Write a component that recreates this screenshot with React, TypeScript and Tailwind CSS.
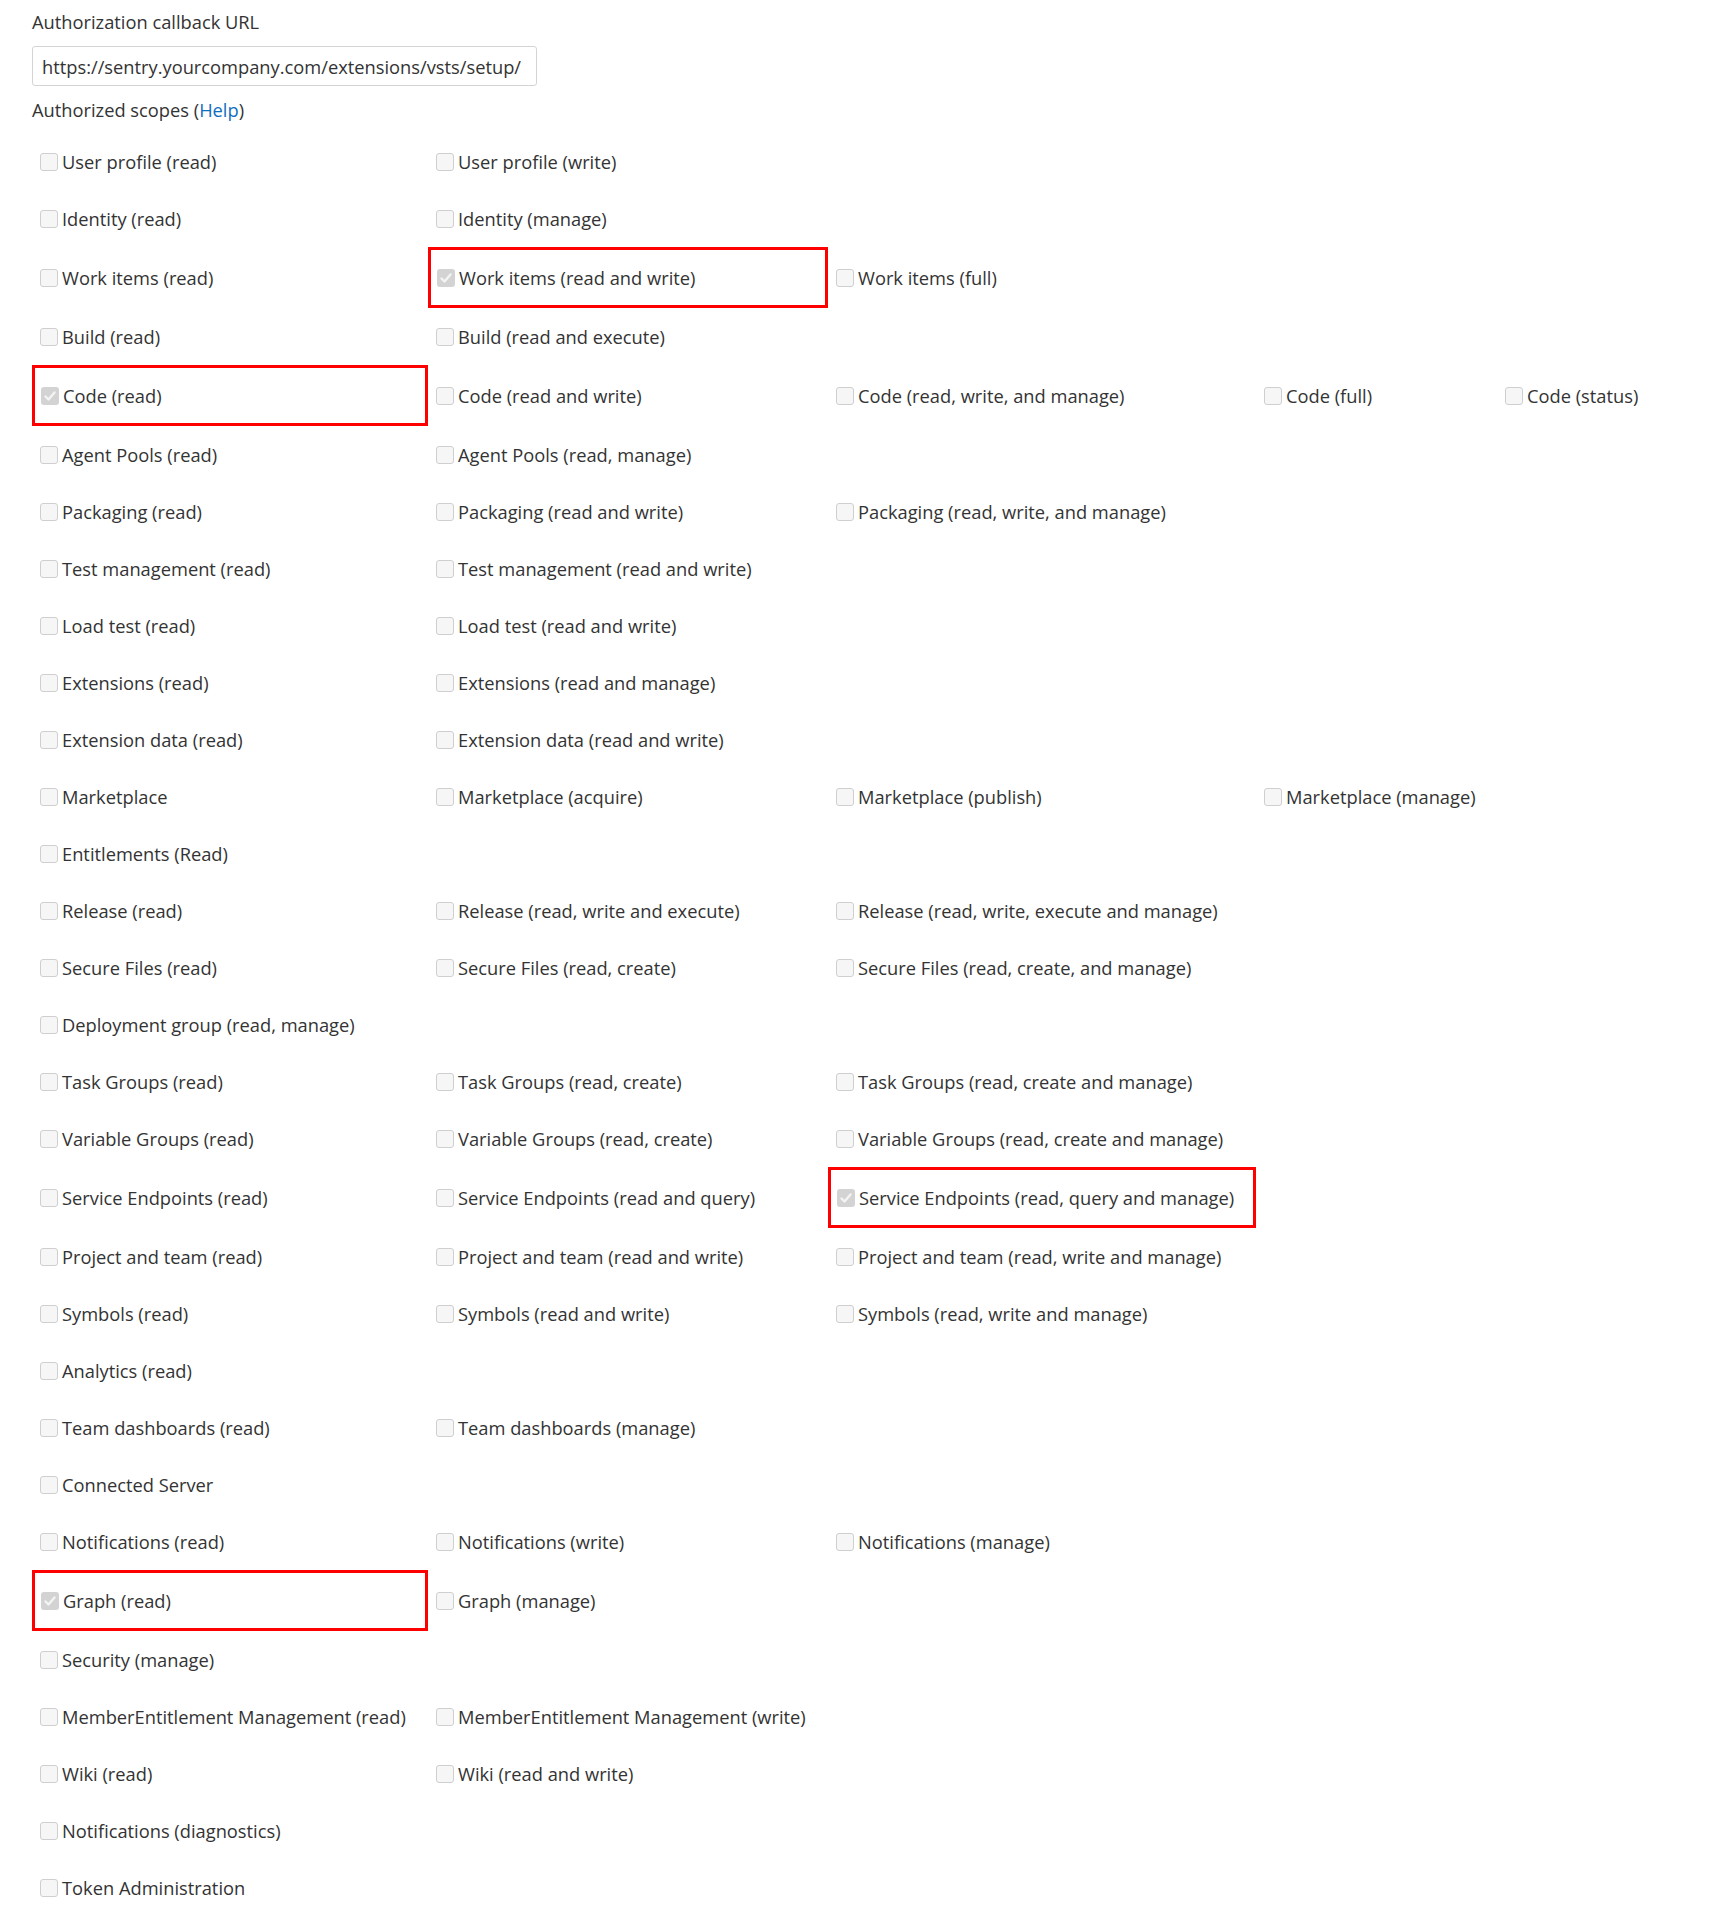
import React from "react";

type Scope = { label: string; checked?: boolean } | null;

const s = (label: string, checked = false): Scope => ({ label, checked });

// one entry per row, five columns wide
const scopes: Scope[][] = [
  [s("User profile (read)"), s("User profile (write)")],
  [s("Identity (read)"), s("Identity (manage)")],
  [s("Work items (read)"), s("Work items (read and write)", true), s("Work items (full)")],
  [s("Build (read)"), s("Build (read and execute)")],
  [
    s("Code (read)", true),
    s("Code (read and write)"),
    s("Code (read, write, and manage)"),
    s("Code (full)"),
    s("Code (status)"),
  ],
  [s("Agent Pools (read)"), s("Agent Pools (read, manage)")],
  [s("Packaging (read)"), s("Packaging (read and write)"), s("Packaging (read, write, and manage)")],
  [s("Test management (read)"), s("Test management (read and write)")],
  [s("Load test (read)"), s("Load test (read and write)")],
  [s("Extensions (read)"), s("Extensions (read and manage)")],
  [s("Extension data (read)"), s("Extension data (read and write)")],
  [s("Marketplace"), s("Marketplace (acquire)"), s("Marketplace (publish)"), s("Marketplace (manage)")],
  [s("Entitlements (Read)")],
  [s("Release (read)"), s("Release (read, write and execute)"), s("Release (read, write, execute and manage)")],
  [s("Secure Files (read)"), s("Secure Files (read, create)"), s("Secure Files (read, create, and manage)")],
  [s("Deployment group (read, manage)")],
  [s("Task Groups (read)"), s("Task Groups (read, create)"), s("Task Groups (read, create and manage)")],
  [
    s("Variable Groups (read)"),
    s("Variable Groups (read, create)"),
    s("Variable Groups (read, create and manage)"),
  ],
  [
    s("Service Endpoints (read)"),
    s("Service Endpoints (read and query)"),
    s("Service Endpoints (read, query and manage)", true),
  ],
  [
    s("Project and team (read)"),
    s("Project and team (read and write)"),
    s("Project and team (read, write and manage)"),
  ],
  [s("Symbols (read)"), s("Symbols (read and write)"), s("Symbols (read, write and manage)")],
  [s("Analytics (read)")],
  [s("Team dashboards (read)"), s("Team dashboards (manage)")],
  [s("Connected Server")],
  [s("Notifications (read)"), s("Notifications (write)"), s("Notifications (manage)")],
  [s("Graph (read)", true), s("Graph (manage)")],
  [s("Security (manage)")],
  [s("MemberEntitlement Management (read)"), s("MemberEntitlement Management (write)")],
  [s("Wiki (read)"), s("Wiki (read and write)")],
  [s("Notifications (diagnostics)")],
  [s("Token Administration")],
];

function Checkbox({ checked }: { checked?: boolean }) {
  if (checked) {
    return (
      <span className="flex h-[18px] w-[18px] shrink-0 items-center justify-center rounded-[3px] bg-[#d3d3d3]">
        <svg width="14" height="14" viewBox="0 0 14 14" fill="none">
          <path d="M2.5 7.5l3 3 6-7" stroke="#f4f4f4" strokeWidth="2.4" strokeLinecap="round" strokeLinejoin="round" />
        </svg>
      </span>
    );
  }
  return <span className="h-[18px] w-[18px] shrink-0 rounded-[3px] border border-[#cfcfcf] bg-[#f6f6f6]" />;
}

function ScopeCell({ scope }: { scope: Scope }) {
  if (!scope) return <div className="min-h-[57px]" />;
  return (
    <label
      className={`flex items-center gap-[4px] ${
        scope.checked ? "min-h-[61px] border-[3px] border-[#ff0000] pl-[6px]" : "min-h-[57px] pl-2"
      }`}
    >
      <Checkbox checked={scope.checked} />
      <span className="whitespace-nowrap">{scope.label}</span>
    </label>
  );
}

export default function App() {
  return (
    <div className="min-h-screen bg-white px-8 pt-[9px] font-['Segoe_UI','Open_Sans',sans-serif] text-[18.3px] leading-[26px] text-[#333333]">
      <div>Authorization callback URL</div>
      <input
        readOnly
        value="https://sentry.yourcompany.com/extensions/vsts/setup/"
        className="mt-[11px] block h-10 w-[505px] rounded-[3px] border border-[#d4d4d4] bg-white px-[9px] text-[#333333] outline-none"
      />
      <div className="mt-[11px]">
        Authorized scopes (<a href="#" className="text-[#106ebe]">Help</a>)
      </div>

      <div className="mt-[10px] grid grid-cols-[396px_400px_428px_241px_224px]">
        {scopes.map((row, i) =>
          [0, 1, 2, 3, 4].map((c) => <ScopeCell key={`${i}-${c}`} scope={row[c] ?? null} />)
        )}
      </div>
    </div>
  );
}
